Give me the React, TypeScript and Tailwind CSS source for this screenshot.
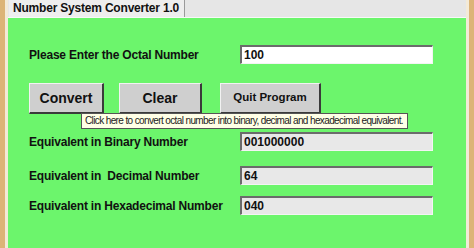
const LABEL = "text-[12px] tracking-[-0.2px] font-bold text-[#111] [font-family:'Liberation_Sans',Arial,sans-serif]";
const FIELD =
  "h-[19px] w-[193px] border-t-2 border-l-2 border-t-[#6b6b6b] border-l-[#6b6b6b] border-b border-r border-b-[#f4f4f4] border-r-[#f4f4f4] pl-[2px] text-[12px] font-bold leading-[16px] text-[#111] [font-family:'Liberation_Sans',Arial,sans-serif]";
const BTN =
  "flex items-center justify-center bg-[#cfcfcf] border-t border-l border-t-[#f2f2f2] border-l-[#f2f2f2] border-b-2 border-r-2 border-b-[#3a3a3a] border-r-[#3a3a3a] font-bold text-[#111] [font-family:'Liberation_Sans',Arial,sans-serif]";

function Row({ label, value, light, top }: { label: string; value: string; light?: boolean; top: string }) {
  return (
    <div className={`flex items-center ${top}`}>
      <div className={`w-[211px] whitespace-pre ${LABEL}`}>{label}</div>
      <div className={`${FIELD} ${light ? "bg-white" : "bg-[#e8e8e8]"}`}>{value}</div>
    </div>
  );
}

export default function App() {
  return (
    <div className="flex h-[248px] w-[474px] overflow-hidden bg-[#dcb477]">
      <div className="w-[5px] bg-[#dcb477]" />
      <div className="w-[3px] bg-[#f3ead8]" />
      <div className="flex w-[458px] flex-col">
        <div className="flex h-[18px] items-end bg-[#e6e6e6] border-b border-[#f8f8f8]">
          <div className="ml-[1px] flex h-[18px] items-center border-r border-[#9a9a9a] bg-[#eeeeee] pl-[4px] pr-[5px] text-[12px] tracking-[-0.2px] font-bold text-[#111] [font-family:'Liberation_Sans',Arial,sans-serif]">
            Number System Converter 1.0
          </div>
        </div>
        <div className="relative flex flex-1 flex-col bg-[#6cf56c] pl-[21px]">
          <Row label="Please Enter the Octal Number" value="100" light top="mt-[27px]" />
          <div className="mt-[19px] flex">
            <div className={`${BTN} h-[31px] w-[75px] text-[14px]`}>Convert</div>
            <div className={`${BTN} ml-[15px] h-[31px] w-[83px] text-[14px]`}>Clear</div>
            <div className={`${BTN} ml-[18px] h-[31px] w-[101px] text-[11.5px]`}>Quit Program</div>
          </div>
          <Row label="Equivalent in Binary Number" value="001000000" top="mt-[18px]" />
          <Row label="Equivalent in  Decimal Number" value="64" top="mt-[15px]" />
          <Row label="Equivalent in Hexadecimal Number" value="040" top="mt-[11px]" />
          <div className="absolute left-[73px] top-[95px] w-[327px] whitespace-nowrap border border-[#555] bg-[#ffffe6] px-[3px] text-[10px] leading-[14px] tracking-[-0.62px] text-[#222] [font-family:'Liberation_Sans',Tahoma,sans-serif]">
            Click here to convert octal number into binary, decimal and hexadecimal equivalent.
          </div>
        </div>
      </div>
      <div className="w-[3px] bg-[#f3ead8]" />
      <div className="flex-1 bg-[#dcb477]" />
    </div>
  );
}
